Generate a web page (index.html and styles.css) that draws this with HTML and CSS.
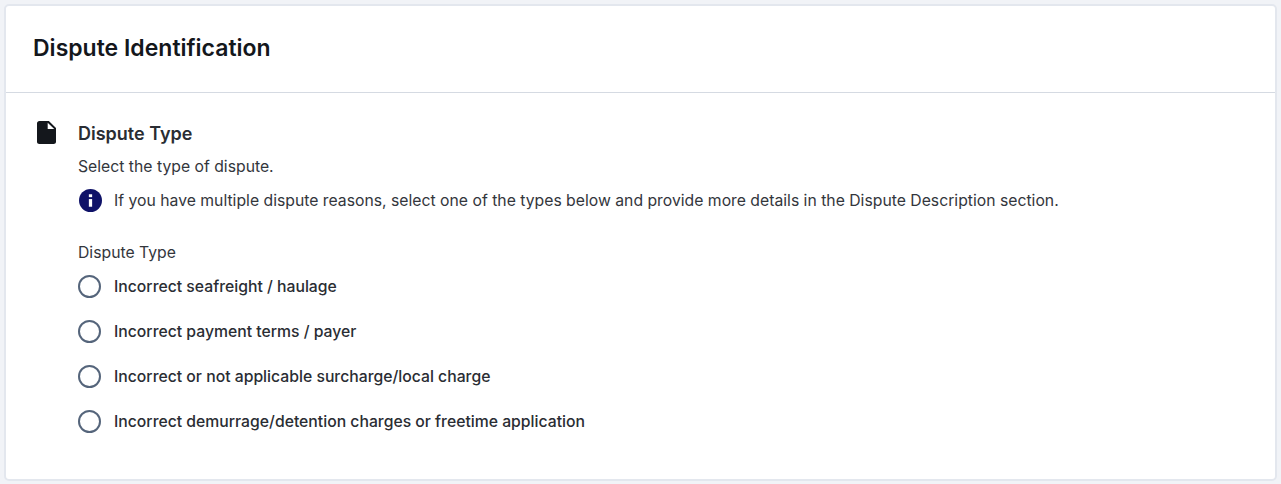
FILE: index.html
```html
<!DOCTYPE html>
<html lang="en">
<head>
<meta charset="utf-8">
<title>Dispute Identification</title>
<link rel="stylesheet" href="styles.css">
</head>
<body>
<section class="card">
  <header class="card-head"><h1>Dispute Identification</h1></header>
  <div class="card-body">
    <svg class="doc" viewBox="4 2 16 20" width="19" height="23" preserveAspectRatio="none"><path d="M6 2c-1.100 0-2 .9-2 2v16c0 1.100.9 2 2 2h12c1.100 0 2-.9 2-2V8l-6-6H6zm7 7V3.500L18.500 9H13z" fill="#14171c"/></svg>
    <div class="content">
      <h2>Dispute Type</h2>
      <p class="sub">Select the type of dispute.</p>
      <div class="info">
        <svg class="info-icon" viewBox="0 0 24 24" width="23" height="23"><circle cx="12" cy="12" r="12" fill="#0f1268"/><rect x="10.300" y="5.500" width="3.400" height="3" fill="#fff"/><rect x="10.300" y="10.500" width="3.400" height="8" fill="#fff"/></svg>
        <span>If you have multiple dispute reasons, select one of the types below and provide more details in the Dispute Description section.</span>
      </div>
      <div class="label">Dispute Type</div>
      <ul class="radios">
        <li><i></i>Incorrect seafreight / haulage</li>
        <li><i></i>Incorrect payment terms / payer</li>
        <li><i></i>Incorrect or not applicable surcharge/local charge</li>
        <li><i></i>Incorrect demurrage/detention charges or freetime application</li>
      </ul>
    </div>
  </div>
</section>
</body>
</html>
```
FILE: styles.css
```css
* { box-sizing: border-box; }
html, body { margin: 0; height: 100%; }
body { background: #f1f3f7; padding: 4px 4px 3px 4px; font-family: Inter, "Liberation Sans", sans-serif; color: #33363c; overflow: hidden; }
.card { background: #fff; border: 2px solid #e3e7ee; border-radius: 5px; height: 477px; }
.card-head { height: 87px; border-bottom: 1px solid #d5dae2; display: flex; align-items: center; padding: 0 0 3px 27px; }
h1 { margin: 0; font-size: 23px; font-weight: 600; color: #14171c; }
.card-body { display: flex; padding: 28px 0 0 31px; }
.doc { flex: none; margin-right: 22px; }
h2 { margin: 0; font-size: 18px; line-height: 25px; font-weight: 600; color: #2a2d33; }
.content { font-size: 15.750px; }
.sub { margin: 10px 0 0; line-height: 22px; }
.info { display: flex; align-items: center; gap: 12px; margin-top: 9px; height: 26px; }
.info-icon { margin-left: 1px; flex: none; }
.label { margin-top: 29px; line-height: 22px; }
.radios { list-style: none; margin: 0; padding: 0; }
.radios li { display: flex; align-items: center; gap: 13.500px; height: 45px; font-weight: 500; color: #2a2d33; }
.radios i { width: 23px; height: 23px; margin: -1px 0 0 -.5px; border: 2px solid #55657b; border-radius: 50%; }
```
